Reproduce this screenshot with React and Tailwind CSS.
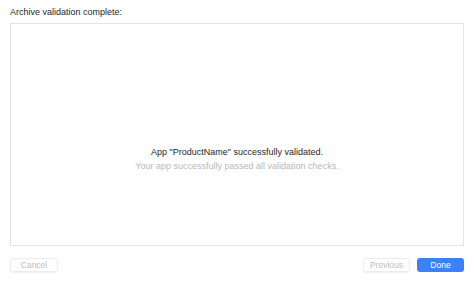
export default function App() {
  return (
    <div
      className="w-[474px] h-[281px] bg-white flex flex-col px-[10px] pt-[6px] text-[#262626]"
      style={{ fontFamily: '"Liberation Sans", Arial, sans-serif' }}
    >
      <div className="text-[9px] leading-[12px] h-[17px]">Archive validation complete:</div>
      <div className="h-[223px] border border-[#e4e4e4] bg-white flex flex-col items-center justify-center pt-[49px]">
        <div className="text-[9px] leading-[14px] text-[#262626]">
          App "ProductName" successfully validated.
        </div>
        <div className="text-[9px] leading-[14px] text-[#b8b8b8]">
          Your app successfully passed all validation checks.
        </div>
      </div>
      <div className="flex items-center mt-[12px]">
        <button className="w-[48px] h-[14px] rounded-[3px] border border-[#ececec] text-[8.5px] leading-[12px] text-[#bdbdbd] shadow-[0_0.5px_1px_rgba(0,0,0,0.06)]">
          Cancel
        </button>
        <div className="flex-1" />
        <button className="w-[47px] h-[14px] rounded-[3px] border border-[#ececec] text-[8.5px] leading-[12px] text-[#bdbdbd] mr-[7px] shadow-[0_0.5px_1px_rgba(0,0,0,0.06)]">
          Previous
        </button>
        <button className="w-[47px] h-[14px] rounded-[3px] bg-[#3b82f6] text-[8.5px] leading-[12px] font-medium text-white">
          Done
        </button>
      </div>
    </div>
  )
}
